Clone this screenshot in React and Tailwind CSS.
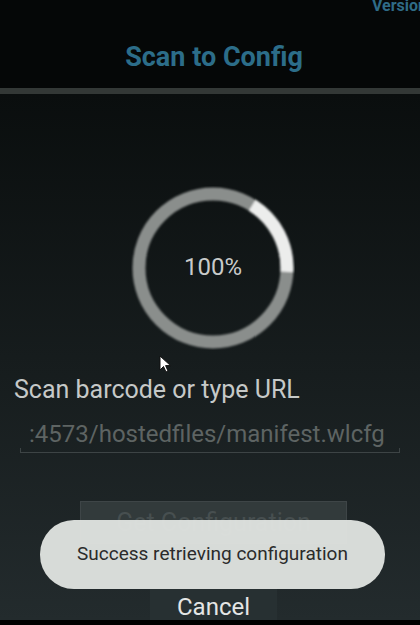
import React from "react";

const Ring = () => {
  const cx = 82;
  const cy = 82;
  const r = 74;
  const pt = (deg) => {
    const a = (deg * Math.PI) / 180;
    return [cx + r * Math.sin(a), cy - r * Math.cos(a)];
  };
  const [x1, y1] = pt(32);
  const [x2, y2] = pt(93);
  return (
    <svg width="164" height="164" viewBox="0 0 164 164">
      <defs>
        <filter id="soft" x="-10%" y="-10%" width="120%" height="120%">
          <feGaussianBlur stdDeviation="1.3" />
        </filter>
      </defs>
      <g filter="url(#soft)">
        <circle cx={cx} cy={cy} r={r} fill="none" stroke="#8a8e8c" strokeWidth="13" />
        <path
          d={`M ${x1} ${y1} A ${r} ${r} 0 0 1 ${x2} ${y2}`}
          fill="none"
          stroke="#ecedec"
          strokeWidth="13"
        />
      </g>
    </svg>
  );
};

const Cursor = () => (
  <svg width="13" height="18" viewBox="0 0 13 18" className="absolute left-[159px] top-[355px]">
    <path d="M1 1 L1 15 L4.5 11.5 L7 17 L9 16 L6.6 10.6 L11.5 10.6 Z" fill="#ffffff" stroke="#111" strokeWidth="1" />
  </svg>
);

export default function App() {
  return (
    <div className="relative w-[420px] h-[625px] overflow-hidden bg-black font-['Roboto','Liberation_Sans',sans-serif]">
      {/* Header */}
      <div className="relative h-[88px] bg-[#050707] flex items-start justify-center pt-[41px]">
        <span className="absolute left-[372px] top-[-6px] whitespace-nowrap text-[16px] font-bold text-[#2f6b86]">
          Version
        </span>
        <h1 className="ml-[8px] text-[27px] leading-[32px] font-bold text-[#2c6d89]">Scan to Config</h1>
      </div>
      <div className="h-[6px] bg-[#333836]" />

      {/* Body */}
      <div className="relative h-[526px] bg-gradient-to-b from-[#0a0e0e] to-[#232b2d] flex flex-col">
        <div className="relative mt-[92px] ml-[131px] w-[164px] h-[164px]">
          <Ring />
          <div className="absolute inset-0 flex items-center justify-center text-[24px] text-[#c9cbca] pb-[2px]">
            100%
          </div>
        </div>

        <div className="mt-[25px] ml-[14px] text-[25px] leading-[29px] text-[#c6c9c8]">
          Scan barcode or type URL
        </div>

        <div className="mt-[16px] mx-[20px] relative h-[33px] border-b border-[#3d4445]">
          <div className="absolute left-0 bottom-0 w-px h-[4px] bg-[#3d4445]" />
          <div className="absolute right-0 bottom-0 w-px h-[4px] bg-[#3d4445]" />
          <div className="ml-[9px] text-[24px] leading-[28px] text-[#5e6463] overflow-hidden whitespace-nowrap">
            :4573/hostedfiles/manifest.wlcfg
          </div>
        </div>

        <div className="mt-[48px] ml-[80px] w-[267px] h-[43px] bg-[#323a3b] border border-[#3e4547] flex justify-center pt-[6px] overflow-hidden">
          <span className="text-[25px] leading-[29px] text-[#474f50] whitespace-nowrap">Get Configuration</span>
        </div>

        <div className="mt-[44px] ml-[150px] w-[127px] h-[32px] bg-[#273032] flex items-start justify-center pt-[5px]">
          <span className="text-[24px] leading-[28px] text-[#e4e6e5]">Cancel</span>
        </div>

        {/* Toast */}
        <div className="absolute left-[40px] top-[426px] w-[345px] h-[69px] rounded-[34px] bg-[#e2e5e2]/95 flex items-center justify-center">
          <span className="text-[19px] text-[#2b2b2b]">Success retrieving configuration</span>
        </div>
      </div>
      <div className="h-[5px] bg-black" />
      <Cursor />
    </div>
  );
}
